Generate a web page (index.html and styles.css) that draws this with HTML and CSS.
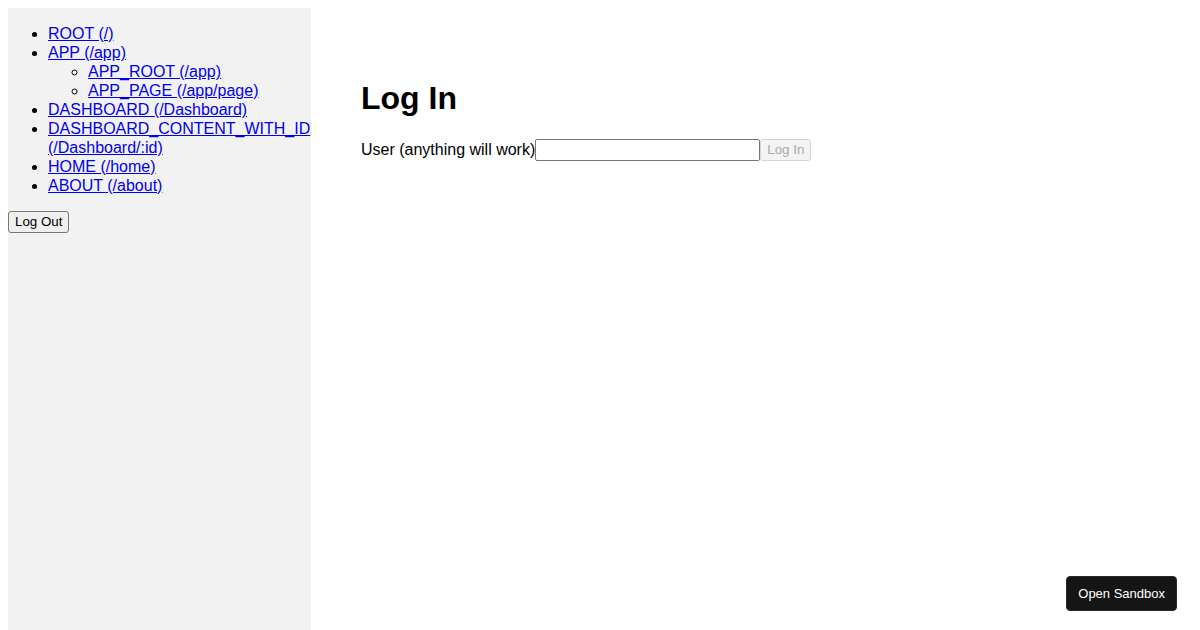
FILE: index.html
```html
<!DOCTYPE html>
<html>
<head>
<meta charset="utf-8">
<link rel="stylesheet" href="styles.css">
</head>
<body>
<div class="layout">
  <nav class="sidebar">
    <ul class="menu">
      <li><a href="#">ROOT (/)</a></li>
      <li><a href="#">APP (/app)</a>
        <ul class="submenu">
          <li><a href="#">APP_ROOT (/app)</a></li>
          <li><a href="#">APP_PAGE (/app/page)</a></li>
        </ul>
      </li>
      <li><a href="#">DASHBOARD (/Dashboard)</a></li>
      <li><a href="#">DASHBOARD_CONTENT_WITH_ID (/Dashboard/:id)</a></li>
      <li><a href="#">HOME (/home)</a></li>
      <li><a href="#">ABOUT (/about)</a></li>
    </ul>
    <button class="btn" type="button">Log Out</button>
  </nav>
  <main class="main">
    <h1 class="title">Log In</h1>
    <form class="login">
      <label class="label">User (anything will work)</label><input type="text" class="field"><button class="btn" type="button" disabled>Log In</button>
    </form>
  </main>
</div>
<a class="sandbox" href="#">Open Sandbox</a>
</body>
</html>
```
FILE: styles.css
```css
body {
  margin: 8px;
  font-family: "Liberation Sans", Arial, sans-serif;
  font-size: 16px;
}
.layout {
  display: flex;
  min-height: 100vh;
}
.sidebar {
  background: #f2f2f2;
  flex: 0 0 303px;
  width: 303px;
}
.menu {
  margin: 16px 0;
  padding-left: 40px;
  line-height: 19px;
}
.submenu {
  padding-left: 40px;
}
.sidebar a {
  color: #0000ee;
}
.btn {
  font-family: "Liberation Sans", Arial, sans-serif;
  font-size: 13.33px;
  line-height: 16px;
  height: 22px;
  padding: 1px 6px;
  border: 1px solid #767676;
  border-radius: 3px;
  background: #efefef;
  color: #000;
  vertical-align: middle;
}
.btn:disabled {
  border-color: #d4d4d4;
  background: #f3f3f3;
  color: #a9a9a9;
}
.main {
  flex: 1;
  padding: 51px 50px 50px;
}
.title {
  font-size: 32px;
  margin: 21.44px 0;
}
.label {
  vertical-align: middle;
}
.field {
  font-family: "Liberation Sans", Arial, sans-serif;
  font-size: 13.33px;
  box-sizing: border-box;
  width: 225px;
  height: 22px;
  border: 1px solid #767676;
  border-radius: 2px;
  padding: 1px 2px;
  vertical-align: middle;
}
.sandbox {
  position: fixed;
  right: 23px;
  bottom: 19px;
  background: #151515;
  color: #fff;
  text-decoration: none;
  font-size: 13px;
  line-height: 15px;
  padding: 9px 11px;
  border-radius: 4px;
  border: 1px solid #2a2a2a;
}
```
